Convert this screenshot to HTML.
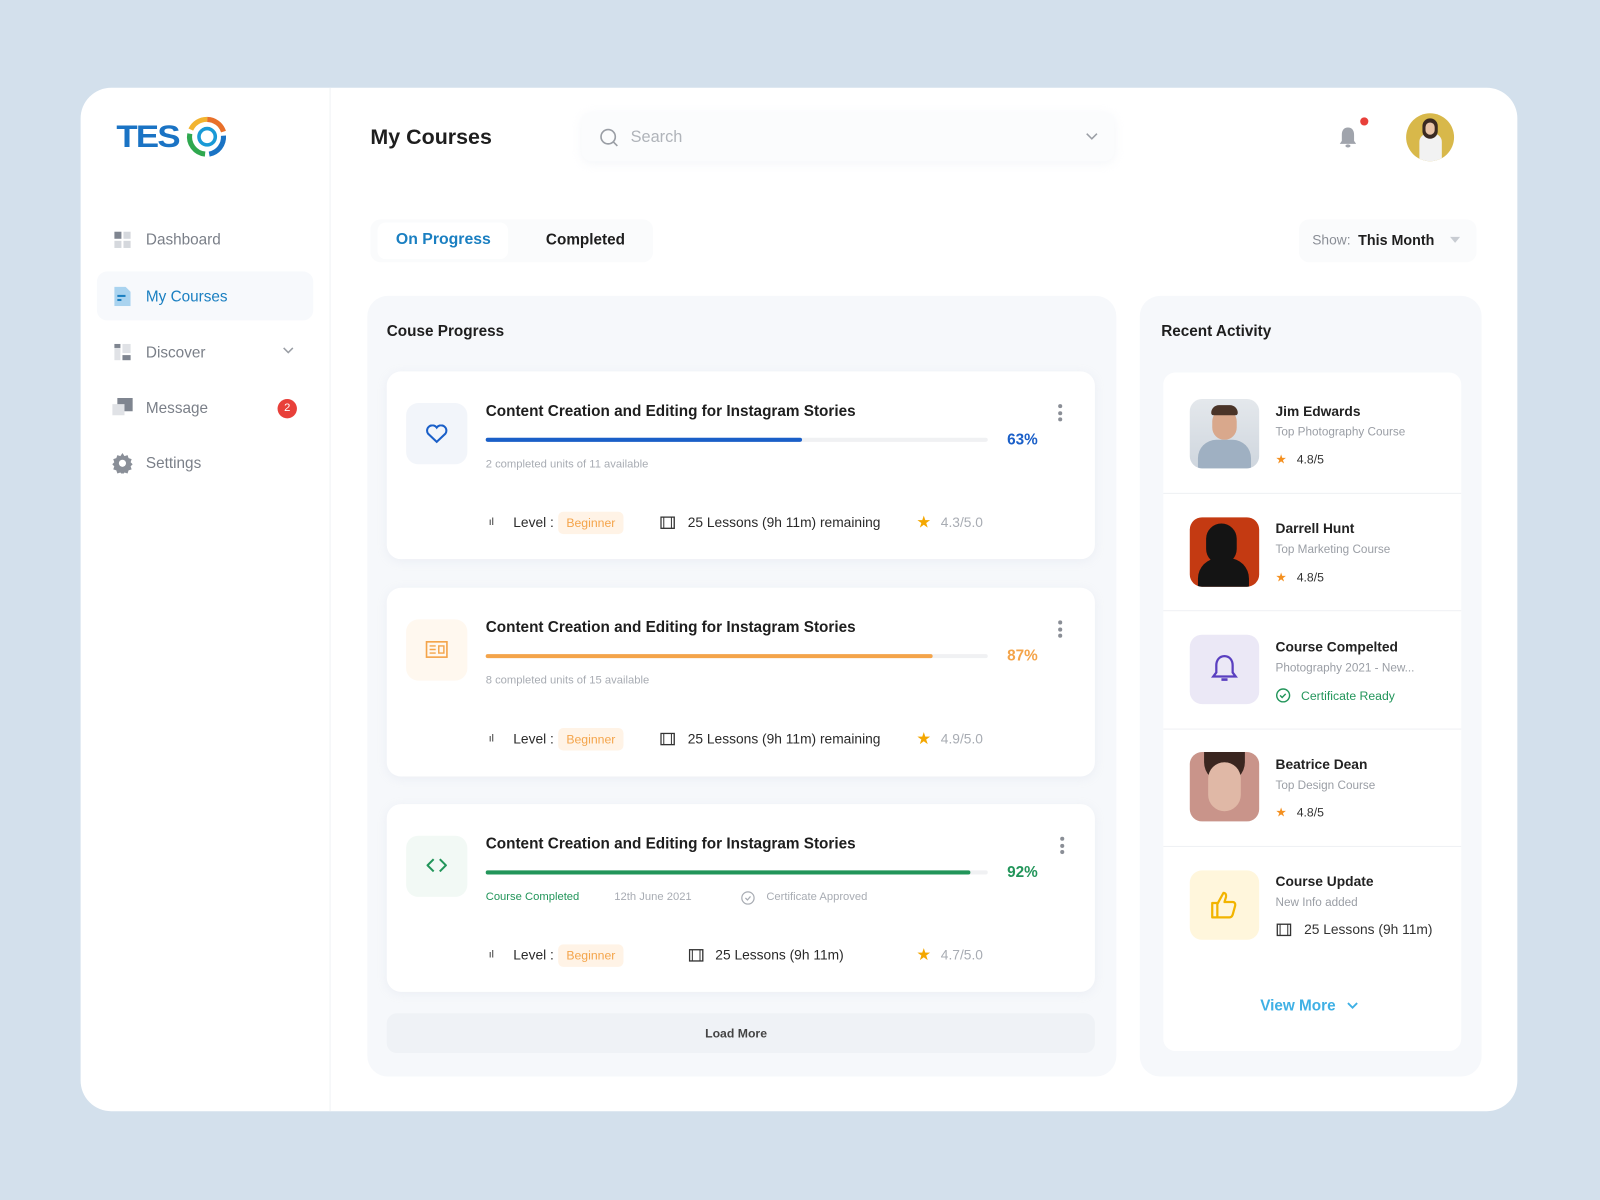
<!DOCTYPE html>
<html><head><meta charset="utf-8"><style>
*{margin:0;padding:0;box-sizing:border-box}
html,body{width:1600px;height:1200px;overflow:hidden;background:#d3e0ec;font-family:"Liberation Sans",sans-serif}
#w{position:absolute;left:0;top:0;width:1568px;height:1176px;transform:scale(1.0204);transform-origin:0 0}
.a{position:absolute}
.card{left:79px;top:86px;width:1408px;height:1003px;background:#fff;border-radius:30px}
.nav{left:143px;font-size:15px;color:#7a7f88;transform:translateY(-50%)}
.t{transform:translateY(-50%);white-space:nowrap}
.cc{left:379px;width:694px;background:#fff;border-radius:14px;box-shadow:0 2px 10px rgba(180,190,210,.15)}
.ib{left:19px;top:31px;width:60px;height:60px;border-radius:12px}
.ttl{left:97px;top:39px;font-size:15px;font-weight:bold;color:#1e1e1e}
.bar{left:97px;top:65px;width:492px;height:4px;background:#f0f1f3;border-radius:2px}
.pct{left:608px;top:67px;font-size:15px;font-weight:bold}
.sub{left:97px;top:91px;font-size:11px;color:#a8acb3}
.meta{top:148px;font-size:13.5px;color:#2a2a2a}
.badge{background:#fff3e6;color:#f4a44a;font-size:12px;padding:4px 8px;border-radius:5px}
.dots{left:658px;top:32px;width:4px}
.dots i{display:block;width:4px;height:4px;background:#8a8e96;border-radius:50%;margin-bottom:2.5px}
.th{left:26px;width:68px;height:68px;border-radius:12px;overflow:hidden}
.nm{left:110px;font-size:13.5px;font-weight:bold;color:#222}
.sm{left:110px;font-size:11.5px;color:#9a9ea5}
.rt{left:110px;font-size:12px;color:#333}
.dv{left:0;width:292px;height:1px;background:#eef0f3}
</style></head><body><div id="w">
<div class="a card"></div>
<div class="a" style="left:323px;top:86px;width:1px;height:1003px;background:#f0f2f5"></div>
<!-- logo -->
<div class="a" style="left:114px;top:116px;font-size:31px;font-weight:900;color:#1a73c4;letter-spacing:-1.5px;line-height:36px;transform:scaleX(1.1);transform-origin:0 0">TES</div>
<svg class="a" style="left:181px;top:113px" width="44" height="42" viewBox="0 0 44 42"><path d="M22 4a17 17 0 0 1 16 12" stroke="#e8702a" stroke-width="5" fill="none"/><path d="M38 20a17 17 0 0 1-14 18" stroke="#1a73c4" stroke-width="5" fill="none"/><path d="M20 38A17 17 0 0 1 5 18" stroke="#2fa84f" stroke-width="5" fill="none"/><path d="M6 14A17 17 0 0 1 22 4" stroke="#f2b430" stroke-width="5" fill="none"/><circle cx="22" cy="21" r="8" stroke="#1a9ad6" stroke-width="3.5" fill="none"/></svg>
<!-- nav -->
<div class="a" style="left:95px;top:266px;width:212px;height:48px;background:#f7f9fc;border-radius:10px"></div>
<svg class="a" style="left:112px;top:227px" width="17" height="17"><rect x="0" y="0" width="7" height="7" fill="#7f8590"/><rect x="9" y="0" width="7" height="7" fill="#d5d8dd"/><rect x="0" y="9" width="7" height="7" fill="#d5d8dd"/><rect x="9" y="9" width="7" height="7" fill="#d5d8dd"/></svg>
<div class="a nav" style="top:235px">Dashboard</div>
<svg class="a" style="left:112px;top:281px" width="16" height="19"><path d="M0 0h11l5 5v14H0z" fill="#a9d3ef"/><rect x="3" y="8" width="8" height="2" fill="#1a7fc1"/><rect x="3" y="12" width="4" height="2" fill="#1a7fc1"/></svg>
<div class="a nav" style="top:291px;color:#1a7fc1">My Courses</div>
<svg class="a" style="left:112px;top:337px" width="17" height="17"><rect x="0" y="0" width="6" height="16" fill="#e0e2e6"/><rect x="0" y="0" width="6" height="4" fill="#7f8590"/><rect x="8" y="0" width="8" height="9" fill="#e0e2e6"/><rect x="8" y="11" width="8" height="5" fill="#7f8590"/></svg>
<div class="a nav" style="top:346px">Discover</div>
<svg class="a" style="left:277px;top:340px" width="11" height="8"><path d="M1 1l4.5 4.5L10 1" stroke="#9a9ea5" stroke-width="1.5" fill="none"/></svg>
<svg class="a" style="left:110px;top:390px" width="21" height="18"><path d="M5 0h15v13H5z" fill="#7f8590"/><path d="M0 6h12v11H0z" fill="#e0e2e6"/></svg>
<div class="a nav" style="top:400px">Message</div>
<div class="a" style="left:272px;top:391px;width:19px;height:19px;border-radius:50%;background:#e8403a;color:#fff;font-size:11px;text-align:center;line-height:19px">2</div>
<svg class="a" style="left:110px;top:444px" width="20" height="20" viewBox="0 0 20 20"><path d="M10 0l2 3 3-1 1 3 3 1-1 3 2 2-2 2 1 3-3 1-1 3-3-1-2 3-2-3-3 1-1-3-3-1 1-3-2-2 2-2-1-3 3-1 1-3 3 1z" fill="#8a8f98"/><circle cx="10" cy="10" r="3.5" fill="#fff"/></svg>
<div class="a nav" style="top:454px">Settings</div>
<!-- header -->
<div class="a t" style="left:363px;top:135px;font-size:21px;font-weight:bold;color:#1e1e1e">My Courses</div>
<div class="a" style="left:570px;top:110px;width:522px;height:48px;background:#fbfcfd;border-radius:10px;box-shadow:0 2px 10px rgba(200,210,225,.2)"></div>
<svg class="a" style="left:587px;top:125px" width="20" height="20"><circle cx="9" cy="9" r="7" stroke="#9a9ea5" stroke-width="1.6" fill="none"/><path d="M14 14l4 4" stroke="#9a9ea5" stroke-width="1.6"/></svg>
<div class="a t" style="left:618px;top:135px;font-size:16px;color:#b0b4ba">Search</div>
<svg class="a" style="left:1064px;top:130px" width="12" height="8"><path d="M1 1l5 5 5-5" stroke="#9a9ea5" stroke-width="1.5" fill="none"/></svg>
<svg class="a" style="left:1312px;top:124px" width="18" height="21"><path d="M9 1c4 0 6 3 6 7v6l2 3H1l2-3V8c0-4 2-7 6-7z" fill="#a0a4ac"/><ellipse cx="9" cy="19" rx="2.5" ry="1.5" fill="#a0a4ac"/></svg>
<div class="a" style="left:1333px;top:115px;width:8px;height:8px;border-radius:50%;background:#e8403a"></div>
<div class="a" style="left:1378px;top:111px;width:47px;height:47px;border-radius:50%;background:#d8b84a;overflow:hidden"><div class="a" style="left:13px;top:20px;width:22px;height:30px;background:#f2f2f2;border-radius:8px 8px 0 0"></div><div class="a" style="left:16px;top:5px;width:15px;height:20px;background:#3a2a22;border-radius:8px"></div><div class="a" style="left:19px;top:9px;width:9px;height:12px;background:#e8c4a8;border-radius:5px"></div></div>
<!-- tabs -->
<div class="a" style="left:363px;top:215px;width:277px;height:42px;background:#fafbfc;border-radius:10px"></div>
<div class="a" style="left:370px;top:218px;width:128px;height:36px;background:#fff;border-radius:8px"></div>
<div class="a t" style="left:388px;top:235px;font-size:15.5px;font-weight:bold;color:#1a7fc1">On Progress</div>
<div class="a t" style="left:535px;top:235px;font-size:15px;font-weight:bold;color:#1e1e1e">Completed</div>
<div class="a" style="left:1273px;top:215px;width:174px;height:42px;background:#fafbfc;border-radius:10px"></div>
<div class="a t" style="left:1286px;top:235px;font-size:13.5px;color:#8a8e96">Show:</div>
<div class="a t" style="left:1331px;top:235px;font-size:14px;font-weight:bold;color:#1e1e1e">This Month</div>
<svg class="a" style="left:1421px;top:232px" width="10" height="6"><path d="M0 0h10L5 6z" fill="#c8ccd2"/></svg>
<!-- left panel -->
<div class="a" style="left:360px;top:290px;width:734px;height:765px;background:#f6f8fb;border-radius:20px"></div>
<div class="a t" style="left:379px;top:325px;font-size:15px;font-weight:bold;color:#1e1e1e">Couse Progress</div>

<div class="a cc" style="top:364px;height:184px">
<div class="a ib" style="background:#f2f5fa"><svg class="a" style="left:19px;top:21px" width="22" height="19" viewBox="0 0 22 19"><path d="M11 17L2.5 9A5 5 0 0 1 11 3a5 5 0 0 1 8.5 6z" stroke="#1a5fc8" stroke-width="2" fill="none"/></svg></div>
<div class="a t ttl">Content Creation and Editing for Instagram Stories</div>
<div class="a bar"><div style="width:310px;height:4px;background:#1a5fc8;border-radius:2px"></div></div>
<div class="a t pct" style="color:#1a5fc8">63%</div>
<div class="a t sub">2 completed units of 11 available</div>
<div class="dots a"><i></i><i></i><i></i></div>
<div class="a t meta" style="left:100px;font-size:10px">ıl</div><div class="a t meta" style="left:124px">Level :</div><div class="a t meta" style="left:168px"><span class="badge">Beginner</span></div>
<svg class="a" style="left:268px;top:142px" width="15" height="13"><rect x=".75" y=".75" width="13" height="11" stroke="#333" stroke-width="1.3" fill="none"/><path d="M3.5 1v11M11 1v11" stroke="#333" stroke-width="1"/></svg>
<div class="a t meta" style="left:295px">25 Lessons (9h 11m) remaining</div>
<div class="a t meta" style="left:519px;color:#f4a700;font-size:16px">★</div><div class="a t meta" style="left:543px;color:#a8acb3">4.3/5.0</div>
</div>

<div class="a cc" style="top:576px;height:185px">
<div class="a ib" style="background:#fff8ef"><svg class="a" style="left:19px;top:21px" width="22" height="18"><rect x="1" y="1" width="20" height="15" stroke="#f4a44a" stroke-width="1.6" fill="none"/><path d="M4 5h6M4 8.5h6M4 12h6M13 5v7h5V5z" stroke="#f4a44a" stroke-width="1.4" fill="none"/></svg></div>
<div class="a t ttl">Content Creation and Editing for Instagram Stories</div>
<div class="a bar"><div style="width:438px;height:4px;background:#f4a44a;border-radius:2px"></div></div>
<div class="a t pct" style="color:#f4a44a">87%</div>
<div class="a t sub">8 completed units of 15 available</div>
<div class="dots a"><i></i><i></i><i></i></div>
<div class="a t meta" style="left:100px;font-size:10px">ıl</div><div class="a t meta" style="left:124px">Level :</div><div class="a t meta" style="left:168px"><span class="badge">Beginner</span></div>
<svg class="a" style="left:268px;top:142px" width="15" height="13"><rect x=".75" y=".75" width="13" height="11" stroke="#333" stroke-width="1.3" fill="none"/><path d="M3.5 1v11M11 1v11" stroke="#333" stroke-width="1"/></svg>
<div class="a t meta" style="left:295px">25 Lessons (9h 11m) remaining</div>
<div class="a t meta" style="left:519px;color:#f4a700;font-size:16px">★</div><div class="a t meta" style="left:543px;color:#a8acb3">4.9/5.0</div>
</div>

<div class="a cc" style="top:788px;height:184px">
<div class="a ib" style="background:#f2f9f5"><svg class="a" style="left:20px;top:22px" width="20" height="14"><path d="M7 1L1 7l6 6M13 1l6 6-6 6" stroke="#22955a" stroke-width="2" fill="none"/></svg></div>
<div class="a t ttl">Content Creation and Editing for Instagram Stories</div>
<div class="a bar"><div style="width:475px;height:4px;background:#22955a;border-radius:2px"></div></div>
<div class="a t pct" style="color:#22955a">92%</div>
<div class="a t sub" style="color:#22955a">Course Completed</div>
<div class="a t sub" style="left:223px">12th June 2021</div>
<svg class="a" style="left:347px;top:85px" width="14" height="14"><circle cx="7" cy="7" r="6" stroke="#a8acb3" stroke-width="1.2" fill="none"/><path d="M4.5 7l2 2 3-3.5" stroke="#a8acb3" stroke-width="1.2" fill="none"/></svg>
<div class="a t sub" style="left:372px">Certificate Approved</div>
<div class="dots a" style="left:660px"><i></i><i></i><i></i></div>
<div class="a t meta" style="left:100px;font-size:10px">ıl</div><div class="a t meta" style="left:124px">Level :</div><div class="a t meta" style="left:168px"><span class="badge">Beginner</span></div>
<svg class="a" style="left:296px;top:142px" width="15" height="13"><rect x=".75" y=".75" width="13" height="11" stroke="#333" stroke-width="1.3" fill="none"/><path d="M3.5 1v11M11 1v11" stroke="#333" stroke-width="1"/></svg>
<div class="a t meta" style="left:322px">25 Lessons (9h 11m)</div>
<div class="a t meta" style="left:519px;color:#f4a700;font-size:16px">★</div><div class="a t meta" style="left:543px;color:#a8acb3">4.7/5.0</div>
</div>

<div class="a" style="left:379px;top:993px;width:694px;height:39px;background:#eff2f6;border-radius:10px"></div>
<div class="a t" style="left:691px;top:1013px;font-size:12px;font-weight:bold;color:#444">Load More</div>

<!-- right panel -->
<div class="a" style="left:1117px;top:290px;width:335px;height:765px;background:#f6f8fb;border-radius:20px"></div>
<div class="a t" style="left:1138px;top:325px;font-size:15px;font-weight:bold;color:#1e1e1e">Recent Activity</div>
<div class="a" style="left:1140px;top:365px;width:292px;height:665px;background:#fff;border-radius:12px">
 <div class="a th" style="top:26px;background:linear-gradient(#e4e8ec,#cfd6de)"><div class="a" style="left:22px;top:10px;width:24px;height:30px;border-radius:12px;background:#d9a88c"></div><div class="a" style="left:21px;top:6px;width:26px;height:10px;border-radius:10px 10px 3px 3px;background:#4a3428"></div><div class="a" style="left:8px;top:40px;width:52px;height:30px;border-radius:18px 18px 0 0;background:#9fb0c2"></div></div>
 <div class="a t nm" style="top:38px">Jim Edwards</div><div class="a t sm" style="top:59px">Top Photography Course</div><div class="a t rt" style="top:85px"><span style="color:#f49020">★</span>&nbsp;&nbsp; 4.8/5</div>
 <div class="a dv" style="top:118px"></div>
 <div class="a th" style="top:142px;background:#c43a12"><div class="a" style="left:16px;top:6px;width:30px;height:40px;border-radius:15px;background:#141414"></div><div class="a" style="left:8px;top:40px;width:50px;height:30px;border-radius:20px 20px 0 0;background:#141414"></div></div>
 <div class="a t nm" style="top:153px">Darrell Hunt</div><div class="a t sm" style="top:174px">Top Marketing Course</div><div class="a t rt" style="top:201px"><span style="color:#f49020">★</span>&nbsp;&nbsp; 4.8/5</div>
 <div class="a dv" style="top:233px"></div>
 <div class="a th" style="top:257px;background:#ebe8f6"><svg class="a" style="left:20px;top:19px" width="28" height="30"><path d="M14 2c5 0 8 4 8 9v7l3 4H3l3-4v-7c0-5 3-9 8-9z" stroke="#5a3fc0" stroke-width="2.2" fill="none"/><path d="M11 25h6" stroke="#5a3fc0" stroke-width="2.5"/></svg></div>
 <div class="a t nm" style="top:269px">Course Compelted</div><div class="a t sm" style="top:290px">Photography 2021 - New...</div>
 <svg class="a" style="left:110px;top:309px" width="15" height="15"><circle cx="7.5" cy="7.5" r="6.3" stroke="#22955a" stroke-width="1.4" fill="none"/><path d="M4.5 7.5l2 2 3.5-3.5" stroke="#22955a" stroke-width="1.4" fill="none"/></svg>
 <div class="a t rt" style="top:317px;left:135px;color:#22955a">Certificate Ready</div>
 <div class="a dv" style="top:349px"></div>
 <div class="a th" style="top:372px;background:#c9948a"><div class="a" style="left:14px;top:0px;width:40px;height:30px;border-radius:0 0 20px 20px;background:#3a2620"></div><div class="a" style="left:18px;top:10px;width:32px;height:48px;border-radius:16px;background:#e0b8a6"></div></div>
 <div class="a t nm" style="top:384px">Beatrice Dean</div><div class="a t sm" style="top:405px">Top Design Course</div><div class="a t rt" style="top:431px"><span style="color:#f49020">★</span>&nbsp;&nbsp; 4.8/5</div>
 <div class="a dv" style="top:464px"></div>
 <div class="a th" style="top:488px;background:#fff6dc"><svg class="a" style="left:19px;top:19px" width="30" height="30" viewBox="0 0 30 30"><path d="M3 13h5v14H3zM8 14l6-11c2 0 3 2 2.5 4L15 12h8c2 0 3 2 2.5 3.5l-2.5 9c-.5 1.5-1.5 2.5-3 2.5H8" stroke="#f2b400" stroke-width="2.2" fill="none" stroke-linejoin="round"/></svg></div>
 <div class="a t nm" style="top:499px">Course Update</div><div class="a t sm" style="top:520px">New Info added</div>
 <svg class="a" style="left:111px;top:540px" width="15" height="13"><rect x=".75" y=".75" width="13" height="11" stroke="#333" stroke-width="1.3" fill="none"/><path d="M3.5 1v11M11 1v11" stroke="#333" stroke-width="1"/></svg>
 <div class="a t rt" style="top:546px;left:138px;font-size:13.5px">25 Lessons (9h 11m)</div>
 <div class="a t" style="left:95px;top:621px;font-size:15px;font-weight:bold;color:#3fb0e5">View More</div>
 <svg class="a" style="left:180px;top:617px" width="11" height="8"><path d="M1 1l4.5 4.5L10 1" stroke="#3fb0e5" stroke-width="1.8" fill="none"/></svg>
</div>
</div></body></html>
